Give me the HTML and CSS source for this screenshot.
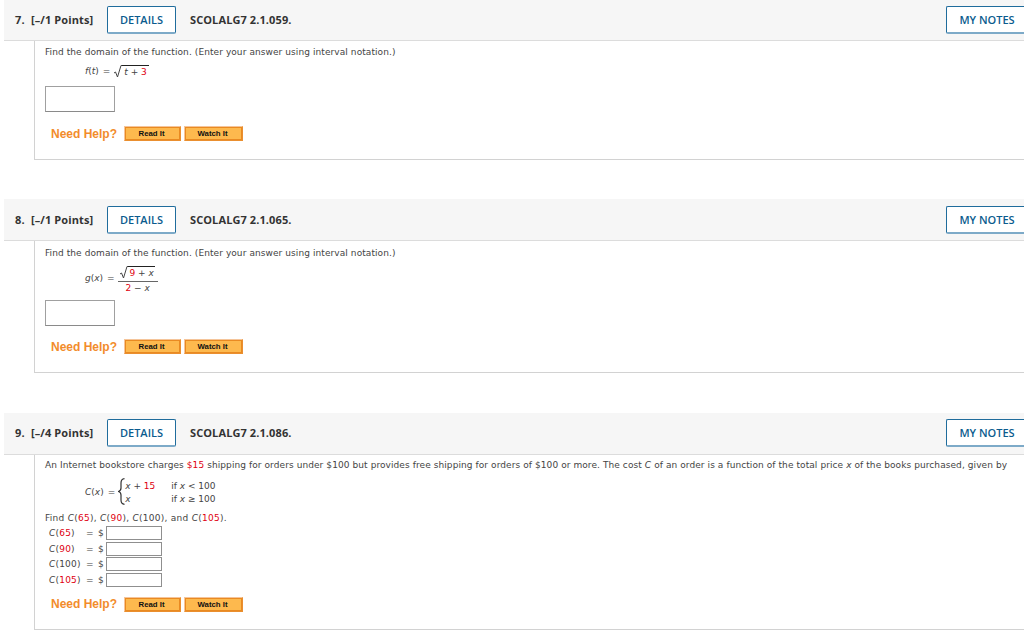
FILE: index.html
```html
<!DOCTYPE html>
<html lang="en">
<head>
<meta charset="utf-8">
<title>Questions</title>
<link rel="stylesheet" href="styles.css">
</head>
<body>
<section class="question q7">
  <header class="qhead">
    <span class="qnum">7.</span><span class="pts">[–/1 Points]</span>
    <button class="btn details">DETAILS</button>
    <span class="code">SCOLALG7 2.1.059.</span>
    <button class="btn notes">MY NOTES</button>
  </header>
  <div class="qbody">
    <p class="prompt">Find the domain of the function. (Enter your answer using interval notation.)</p>
    <div class="eq eq-f"><span class="lhs"><i>f</i>(<i>t</i>)<span class="eqs">=</span></span><svg class="radical" width="8" height="13" viewBox="0 0 8 13" aria-hidden="true"><path d="M0 8L1.500 7L3.500 12L7 .5H8" fill="none" stroke="#444" stroke-width="1"/></svg><span class="over"><i>t</i> + <b class="red">3</b></span></div>
    <div class="answer"></div>
    <div class="help"><span class="need">Need Help?</span><span class="hbtn">Read It</span><span class="hbtn">Watch It</span></div>
  </div>
</section>

<section class="question q8">
  <header class="qhead">
    <span class="qnum">8.</span><span class="pts">[–/1 Points]</span>
    <button class="btn details">DETAILS</button>
    <span class="code">SCOLALG7 2.1.065.</span>
    <button class="btn notes">MY NOTES</button>
  </header>
  <div class="qbody">
    <p class="prompt">Find the domain of the function. (Enter your answer using interval notation.)</p>
    <div class="eq eq-g"><span class="lhs"><i>g</i>(<i>x</i>)<span class="eqs">=</span></span>
      <span class="frac"><span class="num"><svg class="radical" width="8" height="13" viewBox="0 0 8 13" aria-hidden="true"><path d="M0 8L1.500 7L3.500 12L7 .5H8" fill="none" stroke="#444" stroke-width="1"/></svg><span class="over"><b class="red">9</b> + <i>x</i></span></span><span class="den"><b class="red">2</b> − <i>x</i></span></span>
    </div>
    <div class="answer"></div>
    <div class="help"><span class="need">Need Help?</span><span class="hbtn">Read It</span><span class="hbtn">Watch It</span></div>
  </div>
</section>

<section class="question q9">
  <header class="qhead">
    <span class="qnum">9.</span><span class="pts">[–/4 Points]</span>
    <button class="btn details">DETAILS</button>
    <span class="code">SCOLALG7 2.1.086.</span>
    <button class="btn notes">MY NOTES</button>
  </header>
  <div class="qbody">
    <p class="prompt">An Internet bookstore charges <b class="red">$15</b> shipping for orders under $100 but provides free shipping for orders of $100 or more. The cost <i>C</i> of an order is a function of the total price <i>x</i> of the books purchased, given by</p>
    <div class="eq eq-c"><span class="lhs"><i>C</i>(<i>x</i>)<span class="eqs">=</span></span>
      <svg class="brace" width="7" height="27" viewBox="0 0 7 27" aria-hidden="true"><path d="M6.500 .7C3.500 1 3 2.500 3 5V10C3 12 2 13 .5 13.500C2 14 3 15 3 17V22C3 24.500 3.500 26 6.500 26.300" fill="none" stroke="#333" stroke-width="1.200"/></svg>
      <span class="cases">
        <span><i>x</i> + <b class="red">15</b></span><span>if <i>x</i> &lt; 100</span>
        <span><i>x</i></span><span>if <i>x</i> ≥ 100</span>
      </span>
    </div>
    <p class="find">Find <i>C</i>(<b class="red">65</b>), <i>C</i>(<b class="red">90</b>), <i>C</i>(100), and <i>C</i>(<b class="red">105</b>).</p>
    <div class="rows">
      <span><i>C</i>(<b class="red">65</b>)</span><span>=</span><span>$</span><span class="small"></span>
      <span><i>C</i>(<b class="red">90</b>)</span><span>=</span><span>$</span><span class="small"></span>
      <span><i>C</i>(100)</span><span>=</span><span>$</span><span class="small"></span>
      <span><i>C</i>(<b class="red">105</b>)</span><span>=</span><span>$</span><span class="small"></span>
    </div>
    <div class="help"><span class="need">Need Help?</span><span class="hbtn">Read It</span><span class="hbtn">Watch It</span></div>
  </div>
</section>
</body>
</html>
```
FILE: styles.css
```css
* { box-sizing: border-box; }
html, body { margin: 0; padding: 0; background: #fff; overflow: hidden; }
body { width: 1024px; height: 631px; font-family: "DejaVu Sans", sans-serif; font-size: 9px; color: #444; }
p { margin: 0; }
i { font-style: italic; }
b.red { font-weight: 400; color: #e0000f; }

.question { margin-left: 4px; }
.q7 { height: 199px; }
.q8 { height: 214px; }
.qhead {
  display: flex; align-items: center; height: 42px; padding-left: 11px;
  background: #f6f6f6; border-bottom: 1px solid #dcdcdc;
  font-family: "Open Sans", sans-serif; font-size: 11px; font-weight: 700; color: #333; letter-spacing: .1px;
}
.q7 .qhead { height: 41px; padding-bottom: 1px; }
.q9 .qhead { padding-bottom: 2px; }
.qnum { width: 16px; }
.pts { width: 76px; }
.btn {
  font-family: "Open Sans", sans-serif; font-size: 11px; font-weight: 600; color: #0b5c8e;
  background: #fff; border: 1px solid #1f6c9c; border-bottom-width: 2px; border-bottom-color: #7daac8;
  border-radius: 2px; height: 28px; padding: 0;
}
.details { width: 69px; }
.code { margin-left: 14px; flex: 1; }
.notes { width: 78px; border-right: 0; border-radius: 2px 0 0 2px; padding-left: 3px; }

.qbody { margin-left: 30px; border-left: 1px solid #d2d2d2; border-bottom: 1px solid #d2d2d2; padding-left: 10px; }
.q7 .qbody { height: 119px; padding-top: 5px; }
.q8 .qbody { height: 132px; padding-top: 6px; }
.q9 .qbody { height: 175px; padding-top: 4px; }
.prompt { line-height: 12px; white-space: nowrap; letter-spacing: .08px; }

.eq { display: flex; margin-left: 40px; white-space: pre; }
.lhs { display: block; }
.eqs { margin: 0 3px 0 4px; }
.eq-f { height: 14px; margin-top: 7px; align-items: flex-start; }
.eq-f .lhs { line-height: 13px; margin-right: 1px; }
.eq-f .over { padding: 0 2px; }
.eq-g { height: 29px; margin-top: 7px; align-items: center; }
.eq-g .lhs { margin-bottom: 5px; }
.eq-c { height: 27px; margin-top: 7px; align-items: center; }
.radical { flex: none; display: block; }
.over { border-top: 1px solid #222; padding: 0 1px; line-height: 12px; display: block; }
.frac { display: inline-flex; flex-direction: column; align-items: center; width: 40px; line-height: 13px; }
.num { display: flex; justify-content: center; border-bottom: 1px solid #666; width: 100%; height: 16px; }
.den { height: 13px; }
.brace { flex: none; }
.cases { display: grid; grid-template-columns: 46px auto; line-height: 13px; padding-top: 2px; }

.answer { width: 70px; height: 26px; margin-top: 7px; background: #fff; border: 1px solid #a0a0a0; border-bottom-color: #8a8a8a; }
.q8 .answer { margin-top: 5px; }

.help { display: flex; align-items: center; height: 15px; margin-top: 14px; margin-left: 6px; }
.q8 .help { margin-top: 13px; }
.need { font-family: "Liberation Sans", sans-serif; font-size: 12px; font-weight: 700; color: #f28c2c; margin-right: 7px; white-space: nowrap; }
.hbtn {
  display: flex; align-items: center; justify-content: center; height: 15px; width: 57px; margin-right: 3px;
  font-family: "Liberation Sans", sans-serif; font-size: 7.800px; font-weight: 700; color: #111;
  background: #fdb94e; border: 1px solid; border-color: #f5c59a #ea8f2f #ea8f2f #f5c59a;
  box-shadow: inset 0 0 0 1px #e98a22;
  padding-right: 2px;
}
.hbtn + .hbtn { width: 59px; }

.find { margin-top: 7px; line-height: 12px; letter-spacing: .27px; }
.rows { display: grid; grid-template-columns: 37px 12px 8px 56px; grid-auto-rows: 15.700px; align-items: center; margin-top: 1px; margin-left: 4px; letter-spacing: .2px; }
.small { height: 14px; border: 1px solid #8f8f8f; background: #fff; }
.q9 .help { margin-top: 9px; }
```
